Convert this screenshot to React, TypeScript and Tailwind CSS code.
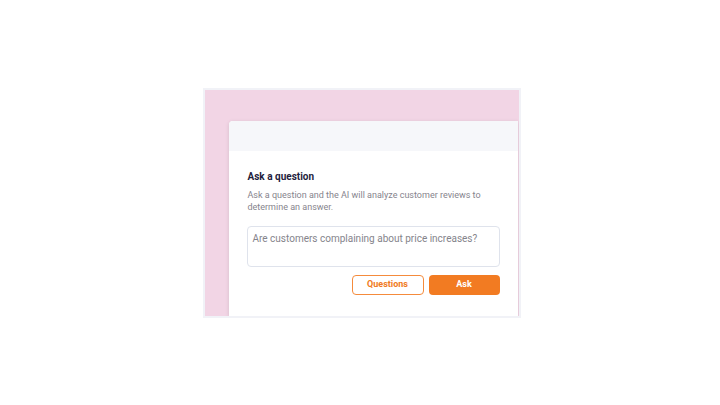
export default function App() {
  return (
    <div
      className="w-[720px] h-[405px] bg-white flex items-center justify-center pl-[3px] pt-[1px]"
      style={{ fontFamily: "Roboto, 'Liberation Sans', sans-serif" }}
    >
      {/* Frame */}
      <div className="w-[318px] h-[230px] border-2 border-[#f1f2f7] bg-[#f2d5e5] flex flex-col overflow-hidden">
        {/* Card */}
        <div className="mt-[31px] ml-[24px] mr-[1px] flex-1 bg-white rounded-tl-[4px] shadow-[0_1px_4px_rgba(0,0,0,0.12)] flex flex-col">
          <div className="h-[30px] bg-[#f6f7fa] rounded-tl-[4px]" />
          <div className="px-[18px] pt-[20px]">
            <h2 className="pl-[1px] text-[10px] font-bold text-[#1f1d3d] leading-[12px]">
              Ask a question
            </h2>
            <p className="pl-[1px] mt-[6px] text-[9px] leading-[12px] text-[#86848d]">
              Ask a question and the AI will analyze customer reviews to
              determine an answer.
            </p>
            <div className="mt-[13px] h-[41px] rounded-[4px] border border-[#dfe3ec] px-[5px] pt-[5px] text-[10px] leading-[14px] text-[#85848b]">
              Are customers complaining about price increases?
            </div>
            <div className="mt-[8px] flex justify-end gap-[5px]">
              <button className="w-[72px] h-[20px] rounded-[4px] border border-[#f58b3c] bg-white text-[9px] font-bold text-[#f07a22]">
                Questions
              </button>
              <button className="w-[71px] h-[20px] rounded-[4px] bg-[#f27b22] text-[9px] font-bold text-white">
                Ask
              </button>
            </div>
          </div>
        </div>
      </div>
    </div>
  );
}
